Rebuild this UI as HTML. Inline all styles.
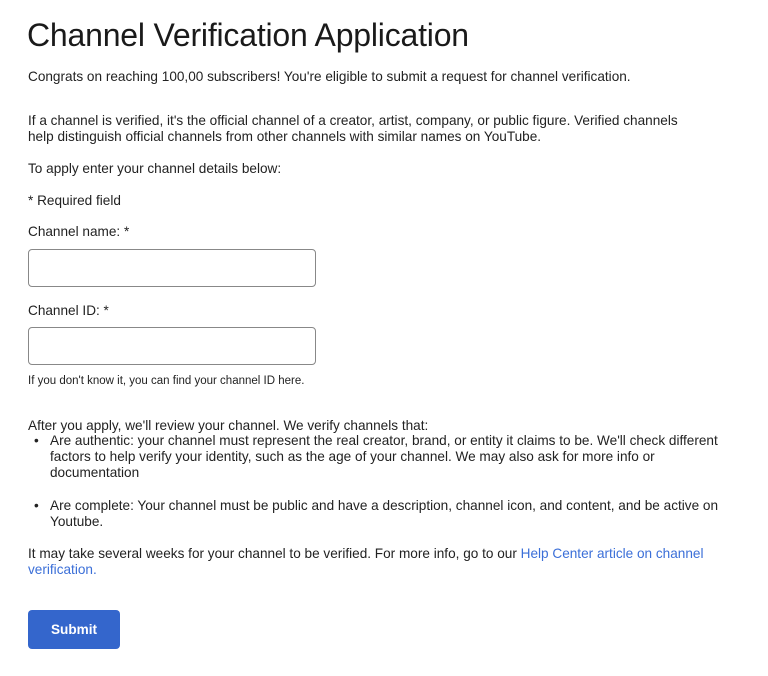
<!DOCTYPE html>
<html><head><style>
body{margin:0;width:768px;height:676px;background:#fff;font-family:"Liberation Sans",sans-serif;color:#222;position:relative;overflow:hidden}
.t{position:absolute;left:28px;font-size:13.6px;white-space:nowrap;line-height:16px}
h1{position:absolute;left:27px;top:17px;margin:0;font-weight:400;font-size:32px;color:#1a1a1a;letter-spacing:-0.2px}
.in{position:absolute;left:28px;width:286px;height:36px;border:1px solid #888;border-radius:4px}
a{color:#3b6fd8;text-decoration:none}
.btn{position:absolute;left:28px;top:610px;width:92px;height:39px;background:#3466cc;border-radius:4px;color:#fff;font-weight:bold;font-size:13.6px;text-align:center;line-height:39px}
</style></head><body>
<h1>Channel Verification Application</h1>
<div class="t" style="top:69px">Congrats on reaching 100,00 subscribers! You're eligible to submit a request for channel verification.</div>
<div class="t" style="top:113px">If a channel is verified, it's the official channel of a creator, artist, company, or public figure. Verified channels<br>help distinguish official channels from other channels with similar names on YouTube.</div>
<div class="t" style="top:161px">To apply enter your channel details below:</div>
<div class="t" style="top:193px">* Required field</div>
<div class="t" style="top:224px">Channel name: *</div>
<div class="in" style="top:249px"></div>
<div class="t" style="top:303px">Channel ID: *</div>
<div class="in" style="top:327px"></div>
<div class="t" style="top:373px;font-size:11.5px">If you don't know it, you can find your channel ID here.</div>
<div class="t" style="top:418px">After you apply, we'll review your channel. We verify channels that:</div>
<div class="t" style="top:433px;left:34px">•</div>
<div class="t" style="top:433px;left:50px">Are authentic: your channel must represent the real creator, brand, or entity it claims to be. We'll check different<br>factors to help verify your identity, such as the age of your channel. We may also ask for more info or<br>documentation</div>
<div class="t" style="top:498px;left:34px">•</div>
<div class="t" style="top:498px;left:50px">Are complete: Your channel must be public and have a description, channel icon, and content, and be active on<br>Youtube.</div>
<div class="t" style="top:546px">It may take several weeks for your channel to be verified. For more info, go to our <a>Help Center article on channel</a><br><a>verification.</a></div>
<div class="btn">Submit</div>
</body></html>
